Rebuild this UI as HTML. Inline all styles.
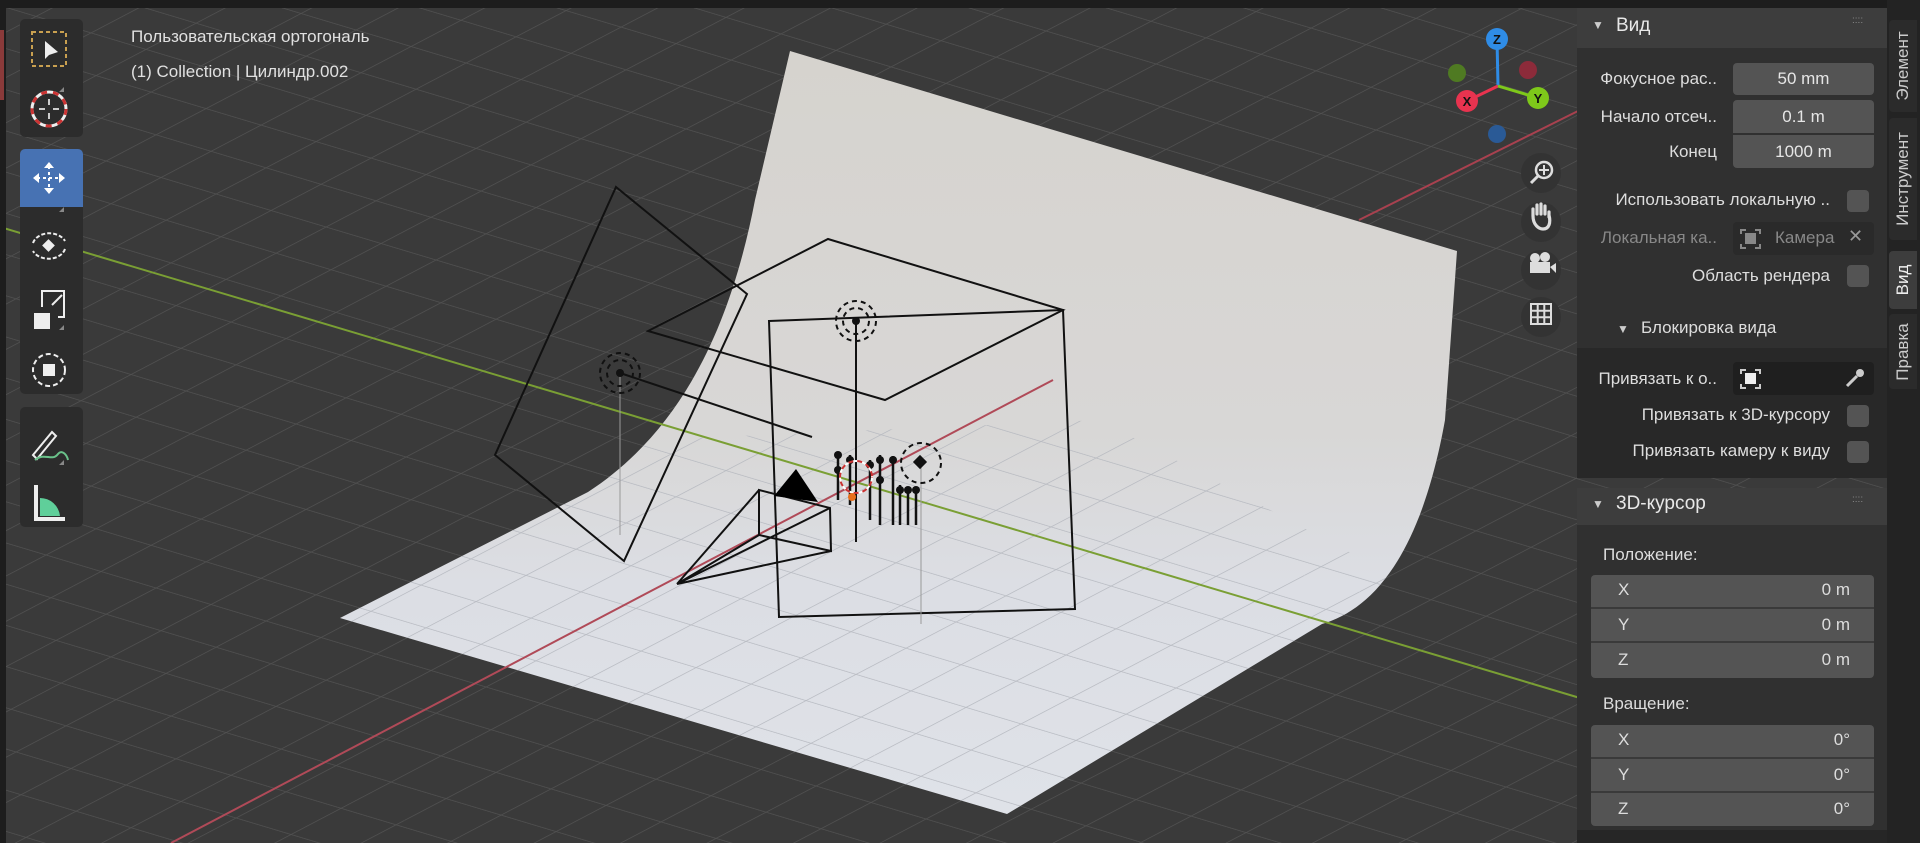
<!DOCTYPE html>
<html><head><meta charset="utf-8"><style>
*{margin:0;padding:0;box-sizing:border-box}
body{width:1920px;height:843px;overflow:hidden;background:#3a3a3a;font-family:"Liberation Sans","DejaVu Sans",sans-serif;color:#ddd;position:relative}
.abs{position:absolute}
.t{position:absolute;font-size:17px;white-space:nowrap}
.r{text-align:right}
.fld{position:absolute;background:#545454;border-radius:4px;font-size:17px;text-align:center;color:#e6e6e6}
.cb{position:absolute;width:22px;height:22px;background:#545454;border-radius:4px}
.tb{position:absolute;left:20px;width:63px;background:#2c2c2c;border-radius:5px}
.nb{position:absolute;width:40px;height:40px;border-radius:50%;background:#333;left:1521px}
.tab{position:absolute;left:1889px;width:28px;background:#2b2b2b;border-radius:4px 0 0 4px}
.tab span{position:absolute;left:50%;top:50%;transform:translate(-50%,-50%) rotate(-90deg);font-size:17px;color:#ccc;white-space:nowrap}
</style></head><body>
<svg class="abs" style="left:0;top:0" width="1920" height="843">
<defs>
<pattern id="g" width="100" height="100" patternUnits="userSpaceOnUse" patternTransform="matrix(0.55 0.165 0.5 -0.262 -20 0)">
<path d="M0 0H100M0 0V100" stroke="#505050" stroke-width="4" fill="none"/></pattern>
<pattern id="g2" width="100" height="100" patternUnits="userSpaceOnUse" patternTransform="matrix(0.55 0.165 0.5 -0.262 -20 0)">
<path d="M0 0H100M0 0V100" stroke="#b4b7be" stroke-width="4" fill="none"/></pattern>
<linearGradient id="bd" x1="0" y1="0" x2="0" y2="1"><stop offset="0" stop-color="#d6d3ce"/><stop offset="0.5" stop-color="#d8d7d6"/><stop offset="0.7" stop-color="#dcdee4"/><stop offset="1" stop-color="#dfe2e8"/></linearGradient>
<clipPath id="fl"><polygon points="340,618 650,440 1100,420 1440,600 1322,624 1007,814"/></clipPath>
</defs>
<rect width="1920" height="843" fill="#3a3a3a"/>
<rect width="1920" height="843" fill="url(#g)"/>
<line x1="1359" y1="220" x2="1580" y2="110" stroke="#a8414f" stroke-width="2"/>
<path d="M340,618 L588,492 C680,432 730,330 755,200 L790,51 L1457,251 L1445,420 C1420,560 1370,610 1322,624 L1007,814 Z" fill="url(#bd)"/>
<path d="M340,618 L588,492 C680,432 730,330 755,200 L790,51 L1457,251 L1445,420 C1420,560 1370,610 1322,624 L1007,814 Z" fill="url(#g2)" clip-path="url(#fl)" opacity="0.85"/>
<line x1="0" y1="227" x2="1580" y2="698" stroke="#7a9f34" stroke-width="2"/>
<line x1="171" y1="843" x2="1053" y2="380" stroke="#b04a58" stroke-width="2"/>
<g stroke="#111" stroke-width="2" fill="none">
<polygon points="616,187 747,294 624,561 495,455"/>
<polygon points="828,239 1063,310 885,400 648,331"/>
<polygon points="769,321 1063,310 1075,609 779,617"/>
<polygon points="759,490 830,508 831,551 759,535"/>
<path d="M677,584L759,490M677,584L830,508M677,584L831,551M677,584L759,535"/>
<path d="M620,373L812,437M856,321V542"/>
</g>
<polygon points="774,496 796,469 818,502" fill="#000"/>
<g stroke="#999" stroke-width="1"><path d="M620,373V535M921,463V624"/></g>
<g fill="none" stroke="#111" stroke-width="2" stroke-dasharray="5 4">
<circle cx="620" cy="373" r="20"/><circle cx="620" cy="373" r="13"/>
<circle cx="856" cy="321" r="20"/><circle cx="856" cy="321" r="13"/>
<circle cx="921" cy="463" r="20"/>
</g>
<g fill="#111"><circle cx="620" cy="373" r="4"/><circle cx="856" cy="321" r="4"/><rect x="915" y="457" width="10" height="10" transform="rotate(45 920 462)"/></g>
<g stroke="#111" stroke-width="2.5">
<path d="M838,452V500M850,455V505M870,460V520M880,455V525M893,456V525M900,485V525M908,488V525M916,488V525"/>
</g>
<g fill="#111"><circle cx="838" cy="455" r="4"/><circle cx="838" cy="470" r="4"/><circle cx="850" cy="460" r="4"/><circle cx="870" cy="465" r="4"/><circle cx="880" cy="460" r="4"/><circle cx="880" cy="480" r="4"/><circle cx="893" cy="460" r="4"/><circle cx="900" cy="490" r="4"/><circle cx="908" cy="490" r="4"/><circle cx="916" cy="490" r="4"/></g>
<circle cx="856" cy="477" r="16" fill="none" stroke="#fff" stroke-width="2" stroke-dasharray="5 4"/>
<circle cx="856" cy="477" r="16" fill="none" stroke="#c33" stroke-width="2" stroke-dasharray="5 4" stroke-dashoffset="4.5"/>
<circle cx="852" cy="497" r="4" fill="#e8701c"/>
<g stroke-width="3"><line x1="1498" y1="86" x2="1497" y2="39" stroke="#2f8ce6"/><line x1="1498" y1="86" x2="1467" y2="101" stroke="#e8334f"/><line x1="1498" y1="86" x2="1538" y2="98" stroke="#7ec81a"/></g>
<circle cx="1457" cy="73" r="9" fill="#4f7a22"/><circle cx="1528" cy="70" r="9" fill="#8c2b3a"/><circle cx="1497" cy="134" r="9" fill="#2a5a96"/>
<circle cx="1497" cy="39" r="11" fill="#2f8ce6"/><circle cx="1467" cy="101" r="11" fill="#e8334f"/><circle cx="1538" cy="98" r="11" fill="#7ec81a"/>
<g font-family="Liberation Sans" font-weight="bold" font-size="13" fill="#111" text-anchor="middle"><text x="1497" y="44">Z</text><text x="1467" y="106">X</text><text x="1538" y="103">Y</text></g>
<rect x="0" y="0" width="1920" height="8" fill="#1d1d1d"/>
<rect x="0" y="0" width="6" height="843" fill="#1d1d1d"/>
<rect x="0" y="30" width="4" height="70" fill="#8a3a3a"/>
</svg>
<div class="t" style="left:131px;top:27px;color:#e0e0e0">Пользовательская ортогональ</div>
<div class="t" style="left:131px;top:62px;color:#e0e0e0">(1) Collection | Цилиндр.002</div>
<!-- toolbar -->
<div class="tb" style="top:19px;height:118px"></div>
<div class="abs" style="left:20px;top:149px;width:63px;height:58px;background:#4772b3;border-radius:5px 5px 0 0"></div>
<div class="tb" style="top:207px;height:187px;border-radius:0 0 5px 5px"></div>
<div class="tb" style="top:407px;height:120px"></div>
<svg class="abs" style="left:20px;top:19px" width="63" height="520">
<rect x="12" y="13" width="34" height="34" fill="none" stroke="#c9a050" stroke-width="2" stroke-dasharray="4 3"/>
<path d="M25,22 L25,40 L29,36 L38,33 Z" fill="#eee"/>
<circle cx="29" cy="90" r="17" fill="none" stroke="#eee" stroke-width="3"/>
<circle cx="29" cy="90" r="17" fill="none" stroke="#c33" stroke-width="3" stroke-dasharray="6 6"/>
<path d="M29,80V86M29,94V100M19,90H25M33,90H39" stroke="#ccc" stroke-width="2"/>
<path d="M29,147V171M17,159H41" stroke="#fff" stroke-width="2" stroke-dasharray="3 3"/>
<path d="M29,143l-5,6h10zM29,175l-5,-6h10zM13,159l6,-5v10zM45,159l-6,-5v10z" fill="#fff"/>
<path d="M13,224 A17 13 0 0 1 45,222M45,230 A17 13 0 0 1 13,232" fill="none" stroke="#eee" stroke-width="2" stroke-dasharray="4 2"/>
<rect x="24" y="222" width="9" height="9" fill="#eee" transform="rotate(45 28.5 226.5)"/>
<rect x="14" y="294" width="16" height="16" fill="#eee"/><path d="M22,288V272H44V298H38M32,286L42,276" fill="none" stroke="#eee" stroke-width="2"/>
<path d="M23,345h12v12h-12z" fill="#eee"/><circle cx="29" cy="351" r="16" fill="none" stroke="#eee" stroke-width="2" stroke-dasharray="5 3"/>
<path d="M13,436 L32,413 L36,417 L17,440 Z" fill="none" stroke="#eee" stroke-width="2"/>
<path d="M15,441 C25,433 32,443 38,435 C42,430 47,436 48,441" fill="none" stroke="#6ac28a" stroke-width="2"/>
<path d="M16,466V500H45" fill="none" stroke="#eee" stroke-width="4"/><path d="M20,497V479A20 20 0 0 1 40,497Z" fill="#5fcf9a"/>
<path d="M44,68l-5,5h5zM44,188l-5,5h5zM44,441l-5,5h5zM44,306l-5,5h5z" fill="#888"/>
</svg>
<div class="nb" style="top:153px"></div><div class="nb" style="top:202px"></div><div class="nb" style="top:250px"></div><div class="nb" style="top:297px"></div>
<svg class="abs" style="left:1521px;top:153px" width="40" height="184">
<circle cx="23" cy="17" r="8" fill="none" stroke="#ddd" stroke-width="2.5"/><path d="M23,12V22M18,17H28" stroke="#ddd" stroke-width="2"/><path d="M17,23L10,30" stroke="#ddd" stroke-width="3"/>
<path d="M12,63 V56 M16,61 V52 M20,61 V51 M24,61 V53 M28,64 V59 M12,63 C12,72 18,76 22,76 C28,76 30,70 28,62" fill="none" stroke="#ddd" stroke-width="3.2" stroke-linecap="round"/>
<circle cx="14" cy="105" r="5" fill="#ddd"/><circle cx="24" cy="104" r="5" fill="#ddd"/><rect x="9" y="109" width="20" height="11" fill="#ddd"/><path d="M29,114l6,-4v10z" fill="#ddd"/>
<rect x="10" y="151" width="20" height="20" fill="none" stroke="#ddd" stroke-width="2"/><path d="M16.7,151V171M23.3,151V171M10,157.7H30M10,164.3H30" stroke="#ddd" stroke-width="2"/>
</svg>
<!-- right panel -->
<div class="abs" style="left:1577px;top:8px;width:310px;height:470px;background:#303030"></div>
<div class="abs" style="left:1577px;top:8px;width:310px;height:40px;background:#3d3d3d"></div>
<div class="abs" style="left:1577px;top:348px;width:310px;height:130px;background:#282828"></div>
<div class="t" style="left:1592px;top:18px;font-size:12px;color:#ccc">▼</div>
<div class="t" style="left:1616px;top:15px;font-size:19px;color:#e8e8e8">Вид</div>
<div class="t" style="left:1852px;top:15px;font-size:10px;color:#888">::::</div>
<div class="t r" style="left:1560px;width:157px;top:69px">Фокусное рас..</div>
<div class="fld" style="left:1733px;top:63px;width:141px;height:32px;line-height:32px">50 mm</div>
<div class="t r" style="left:1560px;width:157px;top:107px">Начало отсеч..</div>
<div class="fld" style="left:1733px;top:100px;width:141px;height:33px;line-height:33px;border-radius:4px 4px 0 0">0.1 m</div>
<div class="t r" style="left:1560px;width:157px;top:142px">Конец</div>
<div class="fld" style="left:1733px;top:135px;width:141px;height:33px;line-height:33px;border-radius:0 0 4px 4px">1000 m</div>
<div class="t r" style="left:1580px;width:250px;top:190px">Использовать локальную ..</div><div class="cb" style="left:1847px;top:190px"></div>
<div class="t r" style="left:1560px;width:157px;top:228px;color:#888">Локальная ка..</div>
<div class="abs" style="left:1733px;top:222px;width:141px;height:33px;background:#2a2a2a;border-radius:4px"></div>
<svg class="abs" style="left:1738px;top:227px" width="26" height="24"><rect x="7" y="6" width="11" height="11" fill="#888"/><path d="M3,7V3H8M17,3H22V7M22,17V21H17M8,21H3V17" fill="none" stroke="#888" stroke-width="2"/></svg>
<div class="t" style="left:1775px;top:228px;color:#888">Камера</div><div class="t" style="left:1848px;top:226px;color:#999;font-size:18px">✕</div>
<div class="t r" style="left:1580px;width:250px;top:266px">Область рендера</div><div class="cb" style="left:1847px;top:265px"></div>
<div class="t" style="left:1617px;top:322px;font-size:12px;color:#ccc">▼</div>
<div class="t" style="left:1641px;top:318px">Блокировка вида</div>
<div class="t r" style="left:1560px;width:157px;top:369px">Привязать к о..</div>
<div class="abs" style="left:1733px;top:362px;width:141px;height:33px;background:#1f1f1f;border-radius:4px"></div>
<svg class="abs" style="left:1738px;top:367px" width="26" height="24"><rect x="7" y="6" width="11" height="11" fill="#eee"/><path d="M3,7V3H8M17,3H22V7M22,17V21H17M8,21H3V17" fill="none" stroke="#ccc" stroke-width="2"/></svg>
<svg class="abs" style="left:1843px;top:366px" width="24" height="24"><path d="M4,20L14,10" stroke="#ccc" stroke-width="3"/><circle cx="17" cy="7" r="4" fill="#ccc"/></svg>
<div class="t r" style="left:1580px;width:250px;top:405px">Привязать к 3D-курсору</div><div class="cb" style="left:1847px;top:405px"></div>
<div class="t r" style="left:1580px;width:250px;top:441px">Привязать камеру к виду</div><div class="cb" style="left:1847px;top:441px"></div>
<div class="abs" style="left:1577px;top:488px;width:310px;height:342px;background:#303030"></div>
<div class="abs" style="left:1577px;top:488px;width:310px;height:37px;background:#3d3d3d"></div>
<div class="t" style="left:1592px;top:497px;font-size:12px;color:#ccc">▼</div>
<div class="t" style="left:1616px;top:493px;font-size:19px;color:#e8e8e8">3D-курсор</div>
<div class="t" style="left:1852px;top:494px;font-size:10px;color:#888">::::</div>
<div class="t" style="left:1603px;top:545px">Положение:</div>
<div class="abs" style="left:1591px;top:575px;width:283px;height:103px;background:#545454;border-radius:4px"></div>
<div class="abs" style="left:1591px;top:607px;width:283px;height:2px;background:#3a3a3a"></div>
<div class="abs" style="left:1591px;top:641px;width:283px;height:2px;background:#3a3a3a"></div>
<div class="t" style="left:1618px;top:580px">X</div><div class="t r" style="left:1750px;width:100px;top:580px">0 m</div>
<div class="t" style="left:1618px;top:615px">Y</div><div class="t r" style="left:1750px;width:100px;top:615px">0 m</div>
<div class="t" style="left:1618px;top:650px">Z</div><div class="t r" style="left:1750px;width:100px;top:650px">0 m</div>
<div class="t" style="left:1603px;top:694px">Вращение:</div>
<div class="abs" style="left:1591px;top:725px;width:283px;height:101px;background:#545454;border-radius:4px"></div>
<div class="abs" style="left:1591px;top:757px;width:283px;height:2px;background:#3a3a3a"></div>
<div class="abs" style="left:1591px;top:791px;width:283px;height:2px;background:#3a3a3a"></div>
<div class="t" style="left:1618px;top:730px">X</div><div class="t r" style="left:1750px;width:100px;top:730px">0°</div>
<div class="t" style="left:1618px;top:765px">Y</div><div class="t r" style="left:1750px;width:100px;top:765px">0°</div>
<div class="t" style="left:1618px;top:799px">Z</div><div class="t r" style="left:1750px;width:100px;top:799px">0°</div>
<div class="abs" style="left:1577px;top:830px;width:310px;height:13px;background:#262626"></div>
<div class="abs" style="left:1887px;top:0;width:33px;height:843px;background:#232323"></div>
<div class="tab" style="top:20px;height:92px"><span>Элемент</span></div>
<div class="tab" style="top:118px;height:122px"><span>Инструмент</span></div>
<div class="tab" style="top:251px;height:58px;background:#3d3d3d"><span style="color:#eee">Вид</span></div>
<div class="tab" style="top:314px;height:75px"><span>Правка</span></div>
</body></html>
